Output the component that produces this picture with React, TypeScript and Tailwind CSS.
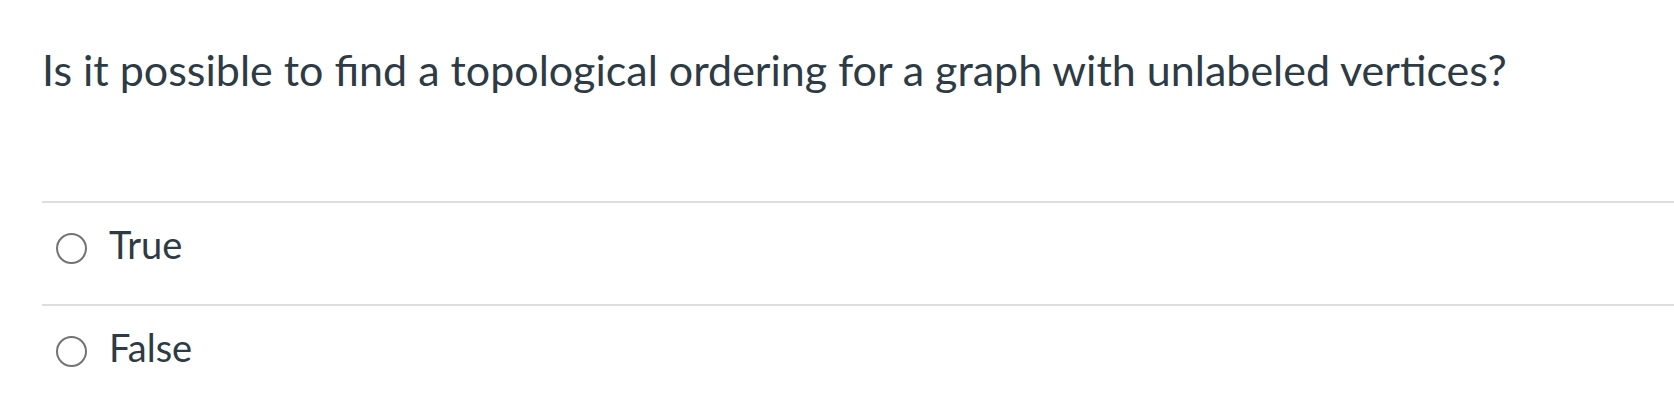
import React from "react";

export default function App() {
  const options = ["True", "False"];
  return (
    <div
      className="w-[1674px] h-[408px] bg-white overflow-hidden pl-[42px]"
      style={{ fontFamily: "Lato, 'Noto Sans', sans-serif" }}
    >
      <div className="pt-[38px] text-[43px] leading-[63px] text-[#2d3b45] whitespace-nowrap">
        Is it possible to find a topological ordering for a graph with unlabeled vertices?
      </div>
      <div className="mt-[100px]">
        {options.map((o) => (
          <div
            key={o}
            className="flex items-start border-t-2 border-[#dddddd] h-[103px]"
          >
            <div className="ml-[14px] mt-[30px] w-[31px] h-[31px] rounded-full border-[2.5px] border-[#737373] shrink-0" />
            <div className="ml-[22px] mt-[23px] text-[38px] leading-[36px] text-[#2d3b45]">
              {o}
            </div>
          </div>
        ))}
      </div>
    </div>
  );
}
